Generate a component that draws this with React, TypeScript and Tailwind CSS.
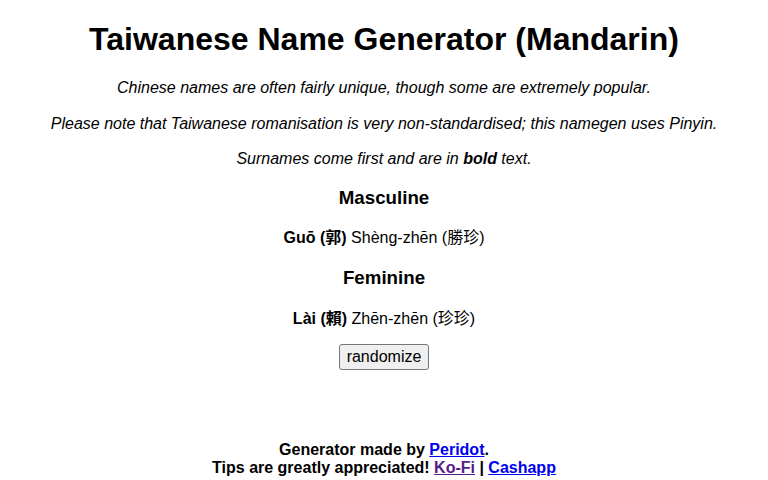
export default function App() {
  return (
    <div className="min-h-[480px] bg-white text-center text-black font-['Liberation_Sans','Noto_Sans_CJK_TC',sans-serif]">
      <div className="pt-[21px]">
        <h1 className="text-[32px] font-bold leading-[37px]">Taiwanese Name Generator (Mandarin)</h1>

        <p className="mt-[20px] text-base italic leading-[19px]">
          Chinese names are often fairly unique, though some are extremely popular.
        </p>
        <p className="mt-[17px] text-base italic leading-[19px]">
          Please note that Taiwanese romanisation is very non-standardised; this namegen uses Pinyin.
        </p>
        <p className="mt-4 text-base italic leading-[19px]">
          Surnames come first and are in <b>bold</b> text.
        </p>

        <h3 className="mt-[19px] text-[18.72px] font-bold leading-[22px]">Masculine</h3>
        <p className="mt-[18px] text-base leading-[21px]">
          <b>Guō (郭)</b> Shèng-zhēn (勝珍)
        </p>

        <h3 className="mt-[19px] text-[18.72px] font-bold leading-[22px]">Feminine</h3>
        <p className="mt-[19px] text-base leading-[21px]">
          <b>Lài (賴)</b> Zhēn-zhēn (珍珍)
        </p>

        <button className="mt-[15px] rounded-[3px] border border-[#767676] bg-[#efefef] px-[7px] py-[2px] text-base leading-[20px]">
          randomize
        </button>
      </div>

      <footer className="mt-[71px] pb-[3px] text-base font-bold leading-[18px]">
        <div>
          Generator made by <a href="#" className="text-[#0000ee] underline">Peridot</a>.
        </div>
        <div>
          Tips are greatly appreciated! <a href="#" className="text-[#551a8b] underline">Ko-Fi</a> |{" "}
          <a href="#" className="text-[#0000ee] underline">Cashapp</a>
        </div>
      </footer>
    </div>
  );
}
